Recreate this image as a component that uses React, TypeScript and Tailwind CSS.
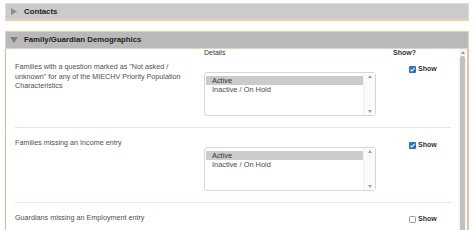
import React from "react";

function Checkbox({ checked }: { checked: boolean }) {
  if (checked) {
    return (
      <svg width="7" height="7" viewBox="0 0 7 7" className="block">
        <rect x="0" y="0" width="7" height="7" rx="1" fill="#2a6fd8" />
        <path d="M1.5 3.6 L2.9 5 L5.6 1.8" stroke="#fff" strokeWidth="1.1" fill="none" />
      </svg>
    );
  }
  return <div className="w-[7px] h-[7px] rounded-[1.5px] border border-[#9a9a9a] bg-white" />;
}

function ListBox() {
  return (
    <div className="w-[172px] h-[44px] border border-[#d6d6d6] rounded-[3px] flex bg-white">
      <div className="flex-1 pt-[3px] pl-[1px] text-[7.4px] leading-[9px] text-[#4a4a4a]">
        <div className="bg-[#cbcbcb] pl-[6px] text-[#333]">Active</div>
        <div className="pl-[6px]">Inactive / On Hold</div>
      </div>
      <div className="w-[12px] flex flex-col items-center justify-between py-[2px] bg-[#fafafa] border-l border-[#f0f0f0]">
        <svg width="4" height="3" viewBox="0 0 4 3"><path d="M0 3 L2 0 L4 3 Z" fill="#a0a0a0" /></svg>
        <svg width="4" height="3" viewBox="0 0 4 3"><path d="M0 0 L2 3 L4 0 Z" fill="#a0a0a0" /></svg>
      </div>
    </div>
  );
}

function ShowCell({ checked }: { checked: boolean }) {
  return (
    <div className="flex items-center gap-[2px] pl-[16px]">
      <Checkbox checked={checked} />
      <span className="text-[7px] leading-[8px] font-bold text-[#333]">Show</span>
    </div>
  );
}

export default function App() {
  return (
    <div className="w-[474px] h-[230px] overflow-hidden bg-white font-['Liberation_Sans',Arial,sans-serif]">
      <div className="pt-[3px] px-[5px]">
        <div className="h-[18px] bg-[#cbcbcb] border border-[#e4dbd2] border-b-2 border-b-[#f2cda8] flex items-center pl-[5px] gap-[7px]">
          <svg width="6" height="7" viewBox="0 0 6 7"><path d="M0 0 L6 3.5 L0 7 Z" fill="#8c8c8c" /></svg>
          <span className="text-[7.8px] font-bold text-[#1e1e1e]">Contacts</span>
        </div>
        <div className="mt-[10px] h-[18px] bg-[#b9b9b9] border border-[#e6d2bf] border-t-[#f0c9a5] flex items-center pl-[4px] gap-[6px]">
          <svg width="8" height="6" viewBox="0 0 8 6"><path d="M0 0 L8 0 L4 6 Z" fill="#7f7f7f" /></svg>
          <span className="text-[7.8px] font-bold text-[#1e1e1e]">Family/Guardian Demographics</span>
        </div>
        <div className="h-[200px] border-l border-[#d8b89a] border-r-2 border-r-[#e9c29c] flex">
          <div className="flex-1 pl-[9px] pr-[8px]">
            <div className="h-[8px] flex text-[7px] leading-[8px] text-[#333]">
              <div className="w-[189px]" />
              <div className="w-[189px]">Details</div>
              <div className="font-bold">Show?</div>
            </div>
            {/* Row 1 */}
            <div className="flex items-start border-b border-[#f1e2d4] pb-[11px]">
              <div className="w-[182px] mt-[5px] text-[7.2px] leading-[9.5px] text-[#4f4f4f]">
                Families with a question marked as "Not asked / unknown" for any of the MIECHV Priority Population Characteristics
              </div>
              <div className="ml-[7px] mt-[15px]">
                <ListBox />
              </div>
              <div className="ml-[17px] mt-[8px]">
                <ShowCell checked />
              </div>
            </div>
            {/* Row 2 */}
            <div className="flex items-start border-b border-[#f1e2d4] pb-[11px]">
              <div className="w-[182px] mt-[10px] text-[7.2px] leading-[9.5px] text-[#4f4f4f]">
                Families missing an Income entry
              </div>
              <div className="ml-[7px] mt-[19px]">
                <ListBox />
              </div>
              <div className="ml-[17px] mt-[13px]">
                <ShowCell checked />
              </div>
            </div>
            {/* Row 3 */}
            <div className="flex items-start">
              <div className="w-[182px] mt-[10px] text-[7.2px] leading-[9.5px] text-[#4f4f4f]">
                Guardians missing an Employment entry
              </div>
              <div className="ml-[7px] w-[172px]" />
              <div className="ml-[17px] mt-[12px]">
                <ShowCell checked={false} />
              </div>
            </div>
          </div>
          <div className="w-[7px] flex flex-col bg-[#f4f4f4] mr-[1px]">
            <div className="h-[7px] flex items-center justify-center">
              <svg width="4" height="3" viewBox="0 0 4 3"><path d="M0 3 L2 0 L4 3 Z" fill="#9a9a9a" /></svg>
            </div>
            <div className="flex-1 mx-[1px] bg-[#c1c1c1] rounded-[2px]" />
          </div>
        </div>
      </div>
    </div>
  );
}
